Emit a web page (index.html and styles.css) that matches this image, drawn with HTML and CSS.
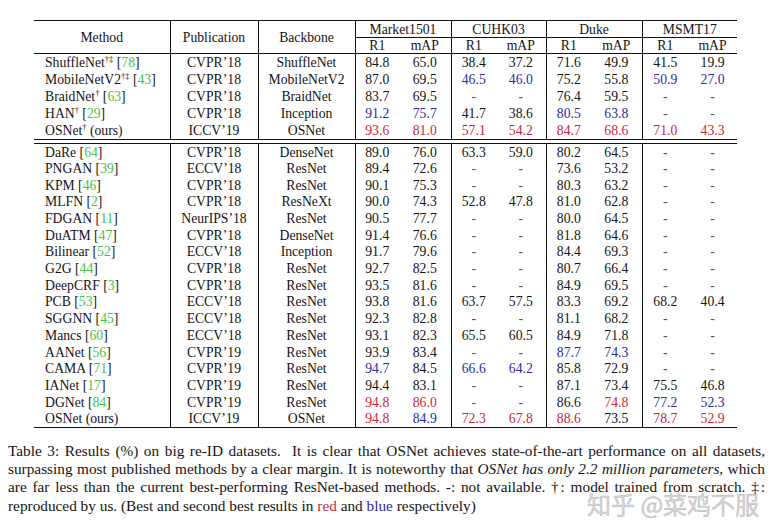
FILE: index.html
```html
<!DOCTYPE html>
<html>
<head>
<meta charset="utf-8">
<link rel="stylesheet" href="styles.css">
</head>
<body>
<div class="page">
<table class="res">
<colgroup>
<col style="width:136px"><col style="width:88px"><col style="width:97px">
<col style="width:44px"><col style="width:52px">
<col style="width:45px"><col style="width:50px">
<col style="width:45px"><col style="width:51px">
<col style="width:46px"><col style="width:49px">
</colgroup>
<thead>
<tr class="h1">
<th rowspan="2" class="vl">Method</th>
<th rowspan="2" class="vl">Publication</th>
<th rowspan="2" class="vl">Backbone</th>
<th colspan="2" class="vl cl">Market1501</th>
<th colspan="2" class="vl cl">CUHK03</th>
<th colspan="2" class="vl cl">Duke</th>
<th colspan="2" class="cl">MSMT17</th>
</tr>
<tr class="h2">
<th>R1</th><th class="vl">mAP</th>
<th>R1</th><th class="vl">mAP</th>
<th>R1</th><th class="vl">mAP</th>
<th>R1</th><th>mAP</th>
</tr>
</thead>
<tbody class="s1">
<tr><td class="m vl">ShuffleNet<sup>†‡</sup> [<span class="ref">78</span>]</td><td class="vl">CVPR’18</td><td class="vl">ShuffleNet</td><td>84.8</td><td class="vl">65.0</td><td>38.4</td><td class="vl">37.2</td><td>71.6</td><td class="vl">49.9</td><td>41.5</td><td>19.9</td></tr>
<tr><td class="m vl">MobileNetV2<sup>†‡</sup> [<span class="ref">43</span>]</td><td class="vl">CVPR’18</td><td class="vl">MobileNetV2</td><td>87.0</td><td class="vl">69.5</td><td class="b">46.5</td><td class="vl b">46.0</td><td>75.2</td><td class="vl">55.8</td><td class="b">50.9</td><td class="b">27.0</td></tr>
<tr><td class="m vl">BraidNet<sup>†</sup> [<span class="ref">63</span>]</td><td class="vl">CVPR’18</td><td class="vl">BraidNet</td><td>83.7</td><td class="vl">69.5</td><td class="d">-</td><td class="vl d">-</td><td>76.4</td><td class="vl">59.5</td><td class="d">-</td><td class="d">-</td></tr>
<tr><td class="m vl">HAN<sup>†</sup> [<span class="ref">29</span>]</td><td class="vl">CVPR’18</td><td class="vl">Inception</td><td class="b">91.2</td><td class="vl b">75.7</td><td>41.7</td><td class="vl">38.6</td><td class="b">80.5</td><td class="vl b">63.8</td><td class="d">-</td><td class="d">-</td></tr>
<tr><td class="m vl">OSNet<sup>†</sup> (ours)</td><td class="vl">ICCV’19</td><td class="vl">OSNet</td><td class="r">93.6</td><td class="vl r">81.0</td><td class="r">57.1</td><td class="vl r">54.2</td><td class="r">84.7</td><td class="vl r">68.6</td><td class="r">71.0</td><td class="r">43.3</td></tr>
</tbody>
<tbody class="gap"><tr><td colspan="11"></td></tr></tbody>
<tbody class="s2">
<tr><td class="m vl">DaRe [<span class="ref">64</span>]</td><td class="vl">CVPR’18</td><td class="vl">DenseNet</td><td>89.0</td><td class="vl">76.0</td><td>63.3</td><td class="vl">59.0</td><td>80.2</td><td class="vl">64.5</td><td class="d">-</td><td class="d">-</td></tr>
<tr><td class="m vl">PNGAN [<span class="ref">39</span>]</td><td class="vl">ECCV’18</td><td class="vl">ResNet</td><td>89.4</td><td class="vl">72.6</td><td class="d">-</td><td class="vl d">-</td><td>73.6</td><td class="vl">53.2</td><td class="d">-</td><td class="d">-</td></tr>
<tr><td class="m vl">KPM [<span class="ref">46</span>]</td><td class="vl">CVPR’18</td><td class="vl">ResNet</td><td>90.1</td><td class="vl">75.3</td><td class="d">-</td><td class="vl d">-</td><td>80.3</td><td class="vl">63.2</td><td class="d">-</td><td class="d">-</td></tr>
<tr><td class="m vl">MLFN [<span class="ref">2</span>]</td><td class="vl">CVPR’18</td><td class="vl">ResNeXt</td><td>90.0</td><td class="vl">74.3</td><td>52.8</td><td class="vl">47.8</td><td>81.0</td><td class="vl">62.8</td><td class="d">-</td><td class="d">-</td></tr>
<tr><td class="m vl">FDGAN [<span class="ref">11</span>]</td><td class="vl">NeurIPS’18</td><td class="vl">ResNet</td><td>90.5</td><td class="vl">77.7</td><td class="d">-</td><td class="vl d">-</td><td>80.0</td><td class="vl">64.5</td><td class="d">-</td><td class="d">-</td></tr>
<tr><td class="m vl">DuATM [<span class="ref">47</span>]</td><td class="vl">CVPR’18</td><td class="vl">DenseNet</td><td>91.4</td><td class="vl">76.6</td><td class="d">-</td><td class="vl d">-</td><td>81.8</td><td class="vl">64.6</td><td class="d">-</td><td class="d">-</td></tr>
<tr><td class="m vl">Bilinear [<span class="ref">52</span>]</td><td class="vl">ECCV’18</td><td class="vl">Inception</td><td>91.7</td><td class="vl">79.6</td><td class="d">-</td><td class="vl d">-</td><td>84.4</td><td class="vl">69.3</td><td class="d">-</td><td class="d">-</td></tr>
<tr><td class="m vl">G2G [<span class="ref">44</span>]</td><td class="vl">CVPR’18</td><td class="vl">ResNet</td><td>92.7</td><td class="vl">82.5</td><td class="d">-</td><td class="vl d">-</td><td>80.7</td><td class="vl">66.4</td><td class="d">-</td><td class="d">-</td></tr>
<tr><td class="m vl">DeepCRF [<span class="ref">3</span>]</td><td class="vl">CVPR’18</td><td class="vl">ResNet</td><td>93.5</td><td class="vl">81.6</td><td class="d">-</td><td class="vl d">-</td><td>84.9</td><td class="vl">69.5</td><td class="d">-</td><td class="d">-</td></tr>
<tr><td class="m vl">PCB [<span class="ref">53</span>]</td><td class="vl">ECCV’18</td><td class="vl">ResNet</td><td>93.8</td><td class="vl">81.6</td><td>63.7</td><td class="vl">57.5</td><td>83.3</td><td class="vl">69.2</td><td>68.2</td><td>40.4</td></tr>
<tr><td class="m vl">SGGNN [<span class="ref">45</span>]</td><td class="vl">ECCV’18</td><td class="vl">ResNet</td><td>92.3</td><td class="vl">82.8</td><td class="d">-</td><td class="vl d">-</td><td>81.1</td><td class="vl">68.2</td><td class="d">-</td><td class="d">-</td></tr>
<tr><td class="m vl">Mancs [<span class="ref">60</span>]</td><td class="vl">ECCV’18</td><td class="vl">ResNet</td><td>93.1</td><td class="vl">82.3</td><td>65.5</td><td class="vl">60.5</td><td>84.9</td><td class="vl">71.8</td><td class="d">-</td><td class="d">-</td></tr>
<tr><td class="m vl">AANet [<span class="ref">56</span>]</td><td class="vl">CVPR’19</td><td class="vl">ResNet</td><td>93.9</td><td class="vl">83.4</td><td class="d">-</td><td class="vl d">-</td><td class="b">87.7</td><td class="vl b">74.3</td><td class="d">-</td><td class="d">-</td></tr>
<tr><td class="m vl">CAMA [<span class="ref">71</span>]</td><td class="vl">CVPR’19</td><td class="vl">ResNet</td><td class="b">94.7</td><td class="vl">84.5</td><td class="b">66.6</td><td class="vl b">64.2</td><td>85.8</td><td class="vl">72.9</td><td class="d">-</td><td class="d">-</td></tr>
<tr><td class="m vl">IANet [<span class="ref">17</span>]</td><td class="vl">CVPR’19</td><td class="vl">ResNet</td><td>94.4</td><td class="vl">83.1</td><td class="d">-</td><td class="vl d">-</td><td>87.1</td><td class="vl">73.4</td><td>75.5</td><td>46.8</td></tr>
<tr><td class="m vl">DGNet [<span class="ref">84</span>]</td><td class="vl">CVPR’19</td><td class="vl">ResNet</td><td class="r">94.8</td><td class="vl r">86.0</td><td class="d">-</td><td class="vl d">-</td><td>86.6</td><td class="vl r">74.8</td><td class="b">77.2</td><td class="b">52.3</td></tr>
<tr><td class="m vl">OSNet (ours)</td><td class="vl">ICCV’19</td><td class="vl">OSNet</td><td class="r">94.8</td><td class="vl b">84.9</td><td class="r">72.3</td><td class="vl r">67.8</td><td class="r">88.6</td><td class="vl">73.5</td><td class="r">78.7</td><td class="r">52.9</td></tr>
</tbody>
</table>

<div class="caption">
<span class="jl">Table 3: Results (%) on big re-ID datasets.&nbsp; It is clear that OSNet achieves state-of-the-art performance on all datasets,</span>
<span class="jl">surpassing most published methods by a clear margin. It is noteworthy that <i>OSNet has only 2.2 million parameters</i>, which</span>
<span class="jl">are far less than the current best-performing ResNet-based methods. -: not available. †: model trained from scratch. ‡:</span>
<span class="last">reproduced by us. (Best and second best results in <span class="cr">red</span> and <span class="cb">blue</span> respectively)</span>
<div class="wm">知乎 @菜鸡不服</div>
</div>
</div>
</body>
</html>
```

FILE: styles.css
```css
html, body {
  margin: 0;
  padding: 0;
  background: #fff;
}
.page {
  width: 774px;
  height: 532px;
  position: relative;
  overflow: hidden;
  font-family: "Liberation Serif", "Times New Roman", serif;
  color: #141414;
}
.res {
  margin: 20px 0 0 34px;
  width: 703px;
  table-layout: fixed;
  border-collapse: collapse;
  font-size: 13.7px;
  border-top: 1px solid #111;
  border-bottom: 1px solid #111;
}
.res th, .res td {
  padding: 0;
  text-align: center;
  font-weight: normal;
  white-space: nowrap;
  line-height: 15px;
}
.res .vl { border-right: 1px solid #111; }
.res .cl { border-bottom: 1px solid #111; }
.res tr.h1 { height: 17px; }
.res tr.h2 { height: 16px; }
.res thead tr.h2 th { border-bottom: 1px solid #111; }
.res thead tr.h1 th[rowspan] { border-bottom: 1px solid #111; }
.s1 tr { height: 17.2px; }
.s2 tr { height: 16.7px; }
.gap td {
  height: 3px;
  border-top: 1px solid #111;
  border-bottom: 1px solid #111;
  padding: 0;
}
.gap tr { height: 3px; }
.res td.m {
  text-align: left;
  padding-left: 11px;
}
.res sup {
  font-size: 8.5px;
  vertical-align: 5px;
  line-height: 0;
}
.ref { color: #49c24a; }
.r { color: #cc1f3a; }
.b { color: #2b2ba8; }
.d { color: #555; }
.caption {
  margin: 14px 0 0 8px;
  width: 757px;
  font-size: 15.3px;
  line-height: 18.4px;
  position: relative;
}
.caption span.jl, .caption span.last {
  display: block;
  white-space: nowrap;
}
.caption span.jl {
  white-space: normal;
  text-align: justify;
  text-align-last: justify;
  height: 18.4px;
  overflow: visible;
}
.cr { color: #cc1f3a; }
.cb { color: #2b2ba8; }
.wm {
  position: absolute;
  left: 579px;
  top: 49px;
  font-family: "Noto Sans CJK SC", sans-serif;
  font-size: 24px;
  line-height: 26px;
  color: rgba(205, 205, 205, 0.8);
  -webkit-text-stroke: 0.6px rgba(160, 160, 160, 0.55);
  white-space: nowrap;
}
```
